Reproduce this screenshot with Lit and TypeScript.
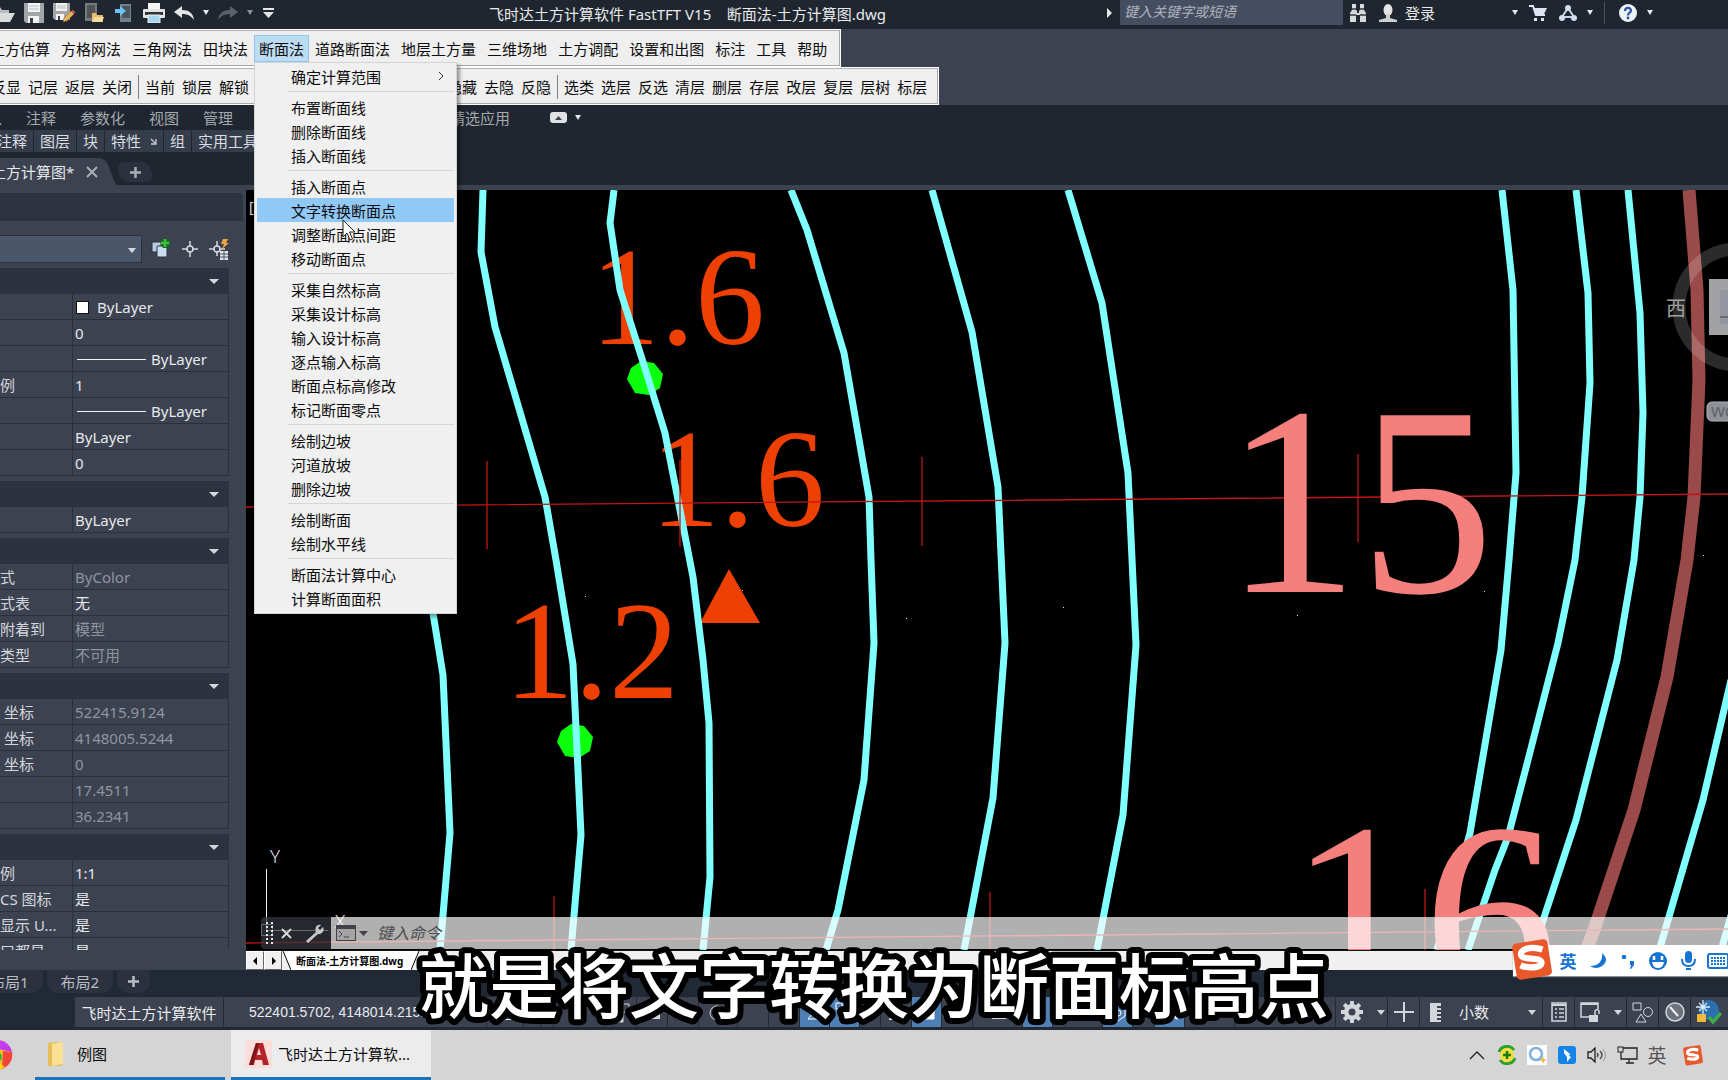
import { LitElement, html, svg, css, nothing } from "lit";
import { customElement } from "lit/decorators.js";
import { classMap } from "lit/directives/class-map.js";
import { styleMap } from "lit/directives/style-map.js";

const base = css`
  * { box-sizing: border-box; }
  button, input, select { font: inherit; color: inherit; background: none; border: 0; padding: 0; margin: 0; border-radius: 0; outline: 0; }
  button { cursor: default; white-space: nowrap; }
  svg { display: block; flex: none; }
`;

const icon = (w: number, h: number, body: unknown) =>
  html`<svg width=${w} height=${h} viewBox="0 0 ${w} ${h}" aria-hidden="true">${body}</svg>`;

const caret = (color = "#e6e8ec", w = 8) =>
  html`<svg width=${w} height="5" viewBox="0 0 8 5" preserveAspectRatio="none" aria-hidden="true"><path d="M0 0h8L4 5z" fill=${color} /></svg>`;

/* ---------- quick access icons ---------- */
const openIcon = icon(22, 20, svg`<path d="M0 4h7l2 3h7v3H6l-3 8H0z" fill="#b9bcc0"/><path d="M6 10h16l-5 9H1z" fill="#d9dadc"/>`);
const saveIcon = icon(20, 20, svg`<path d="M0 0h20v20H2l-2-2z" fill="#a3a6a9"/><rect x="4" width="12" height="9" fill="#f2f2f2"/><path d="M5 3h10M5 6h10" stroke="#b9bbbd"/><rect x="4" y="13" width="11" height="7" fill="#f4f4f4"/><rect x="6" y="15" width="3" height="5" fill="#3b4148"/>`);
const saveAsIcon = icon(22, 20, svg`<path d="M0 0h17v17H2l-2-2z" fill="#a3a6a9"/><rect x="3" width="11" height="8" fill="#f2f2f2"/><path d="M4 3h9M4 5h9" stroke="#b9bbbd"/><rect x="3" y="11" width="8" height="6" fill="#f4f4f4"/><rect x="5" y="13" width="2" height="4" fill="#3b4148"/><path d="M18 8l3 3-7 7-4 1 1-4z" fill="#e8b25a" stroke="#7a5a2a" stroke-width=".6"/><path d="M18 8l3 3 1-2-2-2z" fill="#d35b50"/>`);
const phoneFolderIcon = icon(20, 20, svg`<path d="M1 0h12v18H1z" fill="#77797c"/><path d="M3 2h8v13H3z" fill="#515457"/><path d="M8 10h4l1 2h6v7H8z" fill="#e5b96b"/><path d="M10 14h10l-2 5H8z" fill="#f7dc9c"/>`);
const phoneArrowIcon = icon(18, 20, svg`<path d="M5 1h11v18H5z" fill="#74808a"/><path d="M7 3h8v12H7z" fill="#4a545e"/><path d="M0 6h5V3l6 5-6 5v-3H0z" fill="#6cc5f5"/>`);
const printIcon = icon(22, 20, svg`<rect x="5" width="12" height="6" fill="#f4f4f4"/><rect y="6" width="22" height="9" rx="1" fill="#e4e4e4"/><rect x="2" y="9" width="18" height="3" fill="#2e3338"/><rect x="5" y="12" width="12" height="8" fill="#a8d5f0" stroke="#eee"/>`);
const undoIcon = icon(20, 14, svg`<path d="M0 6l8-6v4c7 0 11 3 12 10-3-4-6-6-12-6v4z" fill="#e4e5e7"/>`);
const redoIcon = icon(20, 14, svg`<path d="M20 6l-8-6v4C5 4 1 7 0 14c3-4 6-6 12-6v4z" fill="#5c6168"/>`);
const customizeIcon = icon(11, 10, svg`<path d="M0 1h11" stroke="#e4e5e7" stroke-width="2"/><path d="M0 4h11L5.500 10z" fill="#e4e5e7"/>`);

const binocularIcon = icon(18, 18, svg`<path d="M3 0h4v6l1 1v2h2V7l1-1V0h4v6l2 3v9h-6v-7H7v7H1V9l2-3z" fill="#d8d9db"/><path d="M1 11h6M11 11h6M3 5h4M11 5h4" stroke="#30363f" stroke-width="1.500"/>`);
const personIcon = icon(18, 18, svg`<ellipse cx="9" cy="6" rx="4.500" ry="6" fill="#e4e4e4"/><path d="M7 10h4v4l7 2v2H0v-2l7-2z" fill="#cfcfd0"/>`);
const cartIcon = icon(18, 16, svg`<path d="M0 1h4l3 9h9" fill="none" stroke="#dfe4f2" stroke-width="2"/><path d="M4 3h14l-3 6H6z" fill="#dfe4f2"/><rect x="5" y="13" width="3" height="3" fill="#dfe4f2"/><rect x="12" y="13" width="3" height="3" fill="#dfe4f2"/>`);
const autodeskIcon = icon(18, 16, svg`<path d="M9 3L3 12h12z" fill="none" stroke="#c8d2ec" stroke-width="2"/><circle cx="9" cy="3" r="3" fill="#d5dcf0"/><circle cx="3" cy="13" r="3" fill="#d5dcf0"/><circle cx="15" cy="13" r="3" fill="#d5dcf0"/>`);
const helpIcon = icon(18, 18, svg`<circle cx="9" cy="9" r="9" fill="#eef1f6"/><path d="M6 7c0-4 6-4 6-.500 0 2.500-3 2-3 5" fill="none" stroke="#2d53a5" stroke-width="2.200"/><circle cx="9" cy="14" r="1.400" fill="#2d53a5"/>`);

@customElement("title-bar")
export class TitleBar extends LitElement {
  static styles = [base, css`
    :host { display: grid; grid-template-columns: 489px 1fr 624px; height: 29px; background: #1f2630; color: #e9eaec; font-size: 15px; overflow: hidden; }
    .quick { display: flex; margin-left: -11px; height: 25px; }
    .cell { display: flex; align-items: center; justify-content: center; width: 30px; height: 25px; flex: none; }
    .w14 { width: 14px; }
    .w16 { width: 16px; }
    .w22 { width: 22px; }
    .title { line-height: 29px; white-space: pre; }
    .right { display: flex; height: 25px; }
    .search { width: 223px; height: 25px; background: #454d60; padding: 0 4px 2px; font-size: 14px; font-style: italic; }
    .search::placeholder { color: #aeb3bd; opacity: 1; }
    .login { width: 104px; padding-left: 2px; text-align: left; }
    .sep { width: 1px; margin: 2px 8px 0 7px; height: 22px; background: #4b525d; }
  `];
  render() {
    const tools: [string, unknown, string][] = [
      ["打开", openIcon, ""], ["保存", saveIcon, ""], ["另存为", saveAsIcon, ""], ["从 Web 打开", phoneFolderIcon, ""],
      ["保存到移动设备", phoneArrowIcon, ""], ["打印", printIcon, ""], ["放弃", undoIcon, ""], ["放弃列表", caret("#e6e8ec", 6), "w14"],
      ["重做", redoIcon, ""], ["重做列表", caret("#8b9098", 6), "w14"], ["自定义", customizeIcon, "w22"],
    ];
    return html`
      <div class="quick">${tools.map(([name, i, c]) => html`<button class="cell ${c}" aria-label=${name}>${i}</button>`)}</div>
      <div class="title">飞时达土方计算软件 FastTFT V15    断面法-土方计算图.dwg</div>
      <div class="right">
        <button class="cell w16" aria-label="展开">${icon(16, 12, svg`<path d="M3 1l5 5-5 5z" fill="#e6e8ec"/>`)}</button>
        <input class="search" aria-label="搜索" placeholder="键入关键字或短语" />
        <button class="cell" aria-label="查找">${binocularIcon}</button>
        <span class="cell">${personIcon}</span>
        <button class="login">登录</button>
        <button class="cell w16" aria-label="账户">${caret("#e6e8ec", 6)}</button>
        <button class="cell" aria-label="商店">${cartIcon}</button>
        <button class="cell" aria-label="应用">${autodeskIcon}</button>
        <button class="cell w14" aria-label="应用列表">${caret("#e6e8ec", 6)}</button>
        <span class="sep"></span>
        <button class="cell" aria-label="帮助">${helpIcon}</button>
        <button class="cell w14" aria-label="帮助列表">${caret("#e6e8ec", 6)}</button>
      </div>`;
  }
}

/* ---------- plug-in menu bars ---------- */
const MENUS = ["土方估算", "方格网法", "三角网法", "田块法", "断面法", "道路断面法", "地层土方量", "三维场地", "土方调配", "设置和出图", "标注", "工具", "帮助"];
const LAYERS_LEFT = [["反显", "记层", "返层", "关闭"], ["当前", "锁层", "解锁"]];
const LAYERS_RIGHT = [["隐藏", "去隐", "反隐"], ["选类", "选层", "反选", "清层", "删层", "存层", "改层", "复层", "层树", "标层"]];
const MENU_GROUPS = [
  ["确定计算范围"],
  ["布置断面线", "删除断面线", "插入断面线"],
  ["插入断面点", "文字转换断面点", "调整断面点间距", "移动断面点"],
  ["采集自然标高", "采集设计标高", "输入设计标高", "逐点输入标高", "断面点标高修改", "标记断面零点"],
  ["绘制边坡", "河道放坡", "删除边坡"],
  ["绘制断面", "绘制水平线"],
  ["断面法计算中心", "计算断面面积"],
];

@customElement("tool-rows")
export class ToolRows extends LitElement {
  static styles = [base, css`
    :host { display: flex; flex-direction: column; align-items: flex-start; background: #3c4250; color: #0c0c0c; font-size: 15px; height: 76px; }
    .bar { display: flex; align-items: center; height: 38px; background: #efefef; border: 1px solid #fff; border-left: 0; box-shadow: inset -1px -1px #a8a8a8, inset 0 1px #b4b4b4; }
    .menus { gap: 1px; padding-right: 8px; }
    .menus button { height: 27px; padding: 0 5px; }
    .menus button:first-child { margin-left: -15px; }
    .menus .open { background: #bcdcf4; box-shadow: inset 0 0 0 1px #92c6ee; }
    .layers { padding: 2px 11px 0 0; }
    .set { display: flex; gap: 7px; }
    .set + .set { margin-left: 6px; padding-left: 6px; border-left: 1px solid #7c7c7c; }
    .near { display: flex; margin-left: -9px; width: 456px; line-height: 24px; }
    .far { display: flex; line-height: 24px; }
  `];
  render() {
    const sets = (groups: string[][]) => groups.map(g => html`<div class="set">${g.map(t => html`<button>${t}</button>`)}</div>`);
    return html`
      <nav class="bar menus">${MENUS.map(m => html`<button class=${classMap({ open: m === "断面法" })}>${m}</button>`)}</nav>
      <div class="bar layers"><div class="near">${sets(LAYERS_LEFT)}</div><div class="far">${sets(LAYERS_RIGHT)}</div></div>`;
  }
}

@customElement("drop-menu")
export class DropMenu extends LitElement {
  static styles = [base, css`
    :host { display: block; width: 203px; background: #f0f0f0; border: 1px solid #d4d4d4; padding: 1px 2px 3px; font-size: 15px; color: #0c0c0c; box-shadow: 3px 3px 3px rgba(0, 0, 0, .35); }
    button { display: flex; align-items: center; justify-content: space-between; width: 100%; height: 24px; padding: 0 10px 0 34px; }
    .hot { background: #90c8f6; }
    .group + .group { padding-top: 7px; background: linear-gradient(#d5d5d5, #d5d5d5) 31px 3px / 100% 1px no-repeat; }
    .cursor { position: absolute; left: 87px; top: 156px; }
  `];
  render() {
    return html`
      ${MENU_GROUPS.map(g => html`<div class="group" role="group">${g.map(t => html`
        <button role="menuitem" class=${classMap({ hot: t === "文字转换断面点" })}>${t}${t === "确定计算范围" ? icon(6, 10, svg`<path d="M1 1l4 4-4 4" fill="none" stroke="#333"/>`) : nothing}</button>`)}</div>`)}
      <div class="cursor">${icon(14, 22, svg`<path d="M1 1v17l4-4 3 7 2.500-1-3-7H13z" fill="#fff" stroke="#222"/>`)}</div>`;
  }
}

/* ---------- ribbon and file tabs ---------- */
@customElement("ribbon-strip")
export class RibbonStrip extends LitElement {
  static styles = [base, css`
    :host { display: block; height: 85px; background: #1f2630; font-size: 15px; overflow: hidden; border-bottom: 5px solid #3c4250; }
    .tabs { display: flex; align-items: center; gap: 24px; height: 25px; margin-left: -28px; color: #a4a8af; }
    .featured { margin-left: 193px; }
    .toggle { display: flex; align-items: center; gap: 8px; margin-left: 16px; }
    .panels { display: flex; height: 22px; gap: 1px; color: #d9dce1; }
    .panels button { background: #363d4a; padding: 0 6px; display: flex; align-items: center; gap: 9px; line-height: 20px; }
    .panels button:first-child { margin-left: -9px; }
    .files { display: flex; height: 33px; padding-top: 6px; color: #e4e6ea; }
    .file { display: flex; align-items: center; gap: 12px; height: 27px; width: 118px; background: #3c4250; clip-path: path("M0 0H98Q106 0 109 9L113 20Q115 27 118 27H0z"); }
    .file span { margin-left: -9px; }
    .add { width: 34px; height: 20px; margin-top: 4px; background: #2b323d; border-radius: 6px 12px 6px 12px; display: flex; align-items: center; justify-content: center; }
  `];
  render() {
    return html`
      <nav class="tabs">
        <button>插入</button><button>注释</button><button>参数化</button><button>视图</button><button>管理</button>
        <button class="featured">精选应用</button>
        <button class="toggle" aria-label="最小化功能区">${icon(17, 11, svg`<rect width="17" height="11" rx="3" fill="#dfe1e4"/><path d="M5 8l3.500-4L12 8z" fill="#3b424e"/>`)}${caret("#e6e8ec", 6)}</button>
      </nav>
      <div class="panels">
        <button>注释</button><button>图层</button><button>块</button>
        <button>特性${icon(7, 7, svg`<path d="M1 1l4 4M6 1v5H1" fill="none" stroke="#c9ccd2" stroke-width="1.300"/>`)}</button>
        <button>组</button><button>实用工具</button>
      </div>
      <div class="files">
        <div class="file"><span>土方计算图*</span><button aria-label="关闭文件">${icon(12, 12, svg`<path d="M1 1l10 10M11 1L1 11" stroke="#a9adb4" stroke-width="2"/>`)}</button></div>
        <button class="add" aria-label="新图形">${icon(11, 11, svg`<path d="M5.500 0v11M0 5.500h11" stroke="#a9adb4" stroke-width="2.500"/>`)}</button>
      </div>`;
  }
}

/* ---------- property palette ---------- */
type Prop = { label?: string; value: string; dim?: boolean; mark?: "swatch" | "line" };
const SECTIONS: { name: string; rows: Prop[] }[] = [
  { name: "常规", rows: [
    { value: "ByLayer", mark: "swatch" }, { value: "0" }, { value: "ByLayer", mark: "line" }, { label: "例", value: "1" },
    { value: "ByLayer", mark: "line" }, { value: "ByLayer" }, { value: "0" }] },
  { name: "三维效果", rows: [{ value: "ByLayer" }] },
  { name: "打印样式", rows: [
    { label: "式", value: "ByColor", dim: true }, { label: "式表", value: "无" }, { label: "附着到", value: "模型", dim: true }, { label: "类型", value: "不可用", dim: true }] },
  { name: "视图", rows: [
    { label: " 坐标", value: "522415.9124", dim: true }, { label: " 坐标", value: "4148005.5244", dim: true }, { label: " 坐标", value: "0", dim: true },
    { value: "17.4511", dim: true }, { value: "36.2341", dim: true }] },
  { name: "其他", rows: [
    { label: "例", value: "1:1" }, { label: "CS 图标", value: "是" }, { label: "显示 U...", value: "是" }, { label: "口都显", value: "是" }] },
];

@customElement("property-palette")
export class PropertyPalette extends LitElement {
  static styles = [base, css`
    :host { display: flex; flex-direction: column; background: #3c4250; color: #e6e8ec; font-size: 15px; min-height: 0; padding: 3px 3px 20px 0; }
    .caption { height: 28px; background: #2e3340; flex: none; border-radius: 0 4px 0 0; }
    .pick { display: flex; align-items: center; height: 28px; margin: 14px 0 5px; flex: none; }
    .combo { position: relative; width: 142px; height: 28px; background: #4a566a; border: 1px solid #2c3441; border-left: 0; }
    .combo select { width: 100%; height: 100%; appearance: none; }
    .combo svg { position: absolute; right: 5px; top: 12px; pointer-events: none; }
    .tools { display: flex; gap: 11px; margin-left: 9px; }
    .list { flex: 1; min-height: 0; overflow: hidden; margin-right: 14px; }
    .head { display: flex; justify-content: flex-end; align-items: center; width: 100%; height: 26px; padding-right: 10px; background: #2c323e; }
    table { width: 100%; border-collapse: separate; border-spacing: 0; table-layout: fixed; margin-bottom: 5px; }
    tr { height: 26px; }
    th, td { padding: 0; height: 26px; line-height: 24px; border-bottom: 1px solid #2a303c; text-align: left; font-weight: 400; white-space: pre; overflow: hidden; }
    th { width: 73px; border-right: 1px solid #2a303c; color: #d3d6db; }
    td { padding-left: 2px; border-right: 1px solid #2a303c; }
    .dim { color: #8f95a0; }
    .swatch { display: inline-block; width: 13px; height: 13px; margin: 0 8px 0 1px; vertical-align: -1px; background: #fff; border: 1px solid #111; }
    .line { display: inline-block; width: 69px; height: 1px; margin: 0 5px 0 2px; vertical-align: 5px; background: #f2f3f5; }
  `];
  render() {
    return html`
      <div class="caption"></div>
      <div class="pick">
        <div class="combo"><select aria-label="对象类型"><option></option></select>${caret("#d4d8de")}</div>
        <div class="tools">
          <button aria-label="切换 PICKADD">${icon(20, 22, svg`<rect x="1" y="4" width="9" height="10" rx="1" fill="#b8cde4" stroke="#27303c"/><rect x="6" y="8" width="10" height="11" rx="1" fill="#c9dcf0" stroke="#27303c"/><path d="M14 1v9M10 5h9" stroke="#12701a" stroke-width="5"/><path d="M14 1v8M10 5h8" stroke="#35c435" stroke-width="2.500"/>`)}</button>
          <button aria-label="选择对象">${icon(16, 22, svg`<path d="M8 3v6M8 13v6M0 11h6M10 11h6" stroke="#d5d8dd" stroke-width="1.500"/><circle cx="8" cy="11" r="3" fill="none" stroke="#d5d8dd" stroke-width="1.500"/>`)}</button>
          <button aria-label="快速选择">${icon(20, 22, svg`<path d="M8 3v6M8 13v5M0 11h6M10 11h6" stroke="#d5d8dd" stroke-width="1.500"/><circle cx="8" cy="11" r="3" fill="none" stroke="#d5d8dd" stroke-width="1.500"/><path d="M14 1h5l-2 4h3l-7 6 2-5h-3z" fill="#f0a742"/><path d="M11 13h8v9h-8z" fill="#e4e6ea"/><path d="M11 16h8M11 19h8M15 13v9" stroke="#4b5260"/>`)}</button>
        </div>
      </div>
      <div class="list">
        ${SECTIONS.map(s => html`
          <button class="head" aria-label=${s.name}>${caret("#d4d8de", 10)}</button>
          <table><tbody>${s.rows.map(r => html`<tr><th scope="row">${r.label ?? ""}</th><td class=${classMap({ dim: !!r.dim })}>${r.mark ? html`<i class=${r.mark}></i>` : nothing}${r.value}</td></tr>`)}</tbody></table>`)}
      </div>`;
  }
}

/* ---------- model space ---------- */
const CONTOURS = [
  "427,575 433,613 443,675 450,833 440,950",
  "483,190 481,252 495,327 545,497 556,560 573,664 581,835 571,950",
  "614,190 610,223 620,290 644,365 665,433 693,577 703,660 709,723 710,877 703,950",
  "791,190 807,230 844,353 869,497 871,560 874,643 864,780 838,910 826,950",
  "932,190 972,332 998,487 1005,643 993,798 964,950",
  "1068,190 1102,303 1128,473 1136,645 1123,815 1097,950",
  "1502,190 1513,290 1516,473 1509,560 1501,650 1470,833 1457,880 1437,950",
  "1576,190 1588,293 1590,383 1582,497 1575,560 1558,643 1528,760 1508,837 1495,870 1468,950",
  "1628,190 1640,313 1643,413 1640,497 1634,560 1617,660 1576,820 1533,951",
  "1731,680 1703,800 1659,951",
  "1734,905 1721,951",
];
const TICKS = [[487, 461, 549], [680, 460, 547], [922, 457, 546], [1358, 454, 542], [554, 896, 951], [990, 892, 951], [1425, 889, 951]];
const SPECKS = [[585, 596], [742, 590], [906, 618], [1063, 607], [1297, 615], [1484, 591], [1703, 555]];
const octagon = (x: number, y: number) => {
  const pts = [[-18, 1], [-14, -10], [-4, -17], [9, -15], [18, -4], [15, 10], [4, 17], [-10, 15]];
  return svg`<polygon points=${pts.map(([a, b]) => `${x + a},${y + b}`).join(" ")} fill="#0cff0c"/>`;
};

@customElement("model-space")
export class ModelSpace extends LitElement {
  static styles = [base, css`
    :host { display: flex; flex-direction: column; min-width: 0; min-height: 0; }
    .canvas { position: relative; flex: 1; min-height: 0; background: #000; overflow: hidden; }
    .canvas > svg { width: 100%; height: 100%; position: absolute; }
    .elev { font: 140px "Liberation Serif", serif; fill: #ee4003; }
    .big { font: 270px "Liberation Serif", serif; fill: #f57f7d; }
    .axis { font: 300 19px "Open Sans", "Noto Sans", sans-serif; fill: #fff; }
    .view { font: 14px "Noto Sans", sans-serif; fill: #ddd; }
    .compass { font: 20px "Noto Sans CJK SC", sans-serif; fill: #a0a0a0; }
    .wcs { font: 15px "Noto Sans", sans-serif; fill: #5b5e66; }
    .command { position: absolute; left: 15px; right: 0; bottom: 1px; height: 32px; display: flex; }
    .grip { display: flex; align-items: center; gap: 7px; width: 70px; padding-left: 5px; background: rgba(52, 56, 64, .72); border-radius: 4px 0 0 4px; }
    .grip button + button { margin-left: 6px; }
    .entry { display: flex; flex: 1; align-items: center; padding-left: 5px; background: rgba(255, 255, 255, .69); }
    .entry button { display: flex; align-items: center; gap: 3px; }
    .entry input { flex: 1; margin-left: 9px; font-size: 16px; font-style: italic; color: #333; }
    .entry input::placeholder { color: #4f4f4f; opacity: 1; }
    .strip { display: flex; height: 20px; background: #f0f0f0; border-top: 1px solid #111; flex: none; }
    .strip .arrow { width: 18px; display: flex; align-items: center; justify-content: center; border: 1px solid #888; border-color: #fff #666 #666 #fff; }
    .tab { padding: 0 8px 0 5px; font-size: 10px; font-weight: 700; color: #000; background: #fff; }
  `];
  render() {
    return html`
      <div class="canvas">
        <svg aria-label="模型空间">
          <g transform="translate(-246 -190)">
            <text class="elev" x="590" y="344">1.6</text>
            <text class="elev" x="650" y="526">1.6</text>
            <text class="elev" x="504" y="698">1.2</text>
            <polygon points="729,569 760,623 700,623" fill="#ee4003"/>
            ${octagon(645, 378)}${octagon(575, 741)}
            <polyline points="1689,190 1697,290 1699,380 1694,497 1687,560 1667,677 1634,810 1595,927 1586,951" fill="none" stroke="#994a49" stroke-width="13"/>
            <g fill="none" stroke="#80ffff" stroke-width="7">${CONTOURS.map(p => svg`<polyline points=${p}/>`)}</g>
            <g stroke="#c01616" stroke-width="1.300">
              <path d="M246 507L1728 494M246 943L1728 929"/>
              ${TICKS.map(([x, a, b]) => svg`<path d=${`M${x} ${a}V${b}`}/>`)}
            </g>
            <text class="big" x="1224" y="592">15</text>
            <text class="big" x="1288" y="1008">16</text>
            ${SPECKS.map(([x, y]) => svg`<rect x=${x} y=${y} width="1" height="1" fill="#ddd"/>`)}
            <text class="view" x="249" y="212">[</text>
            <text class="axis" x="270" y="863">Y</text>
            <text class="axis" x="335" y="928">X</text>
            <path d="M266.500 869v61.500h62M261.500 924.500h11v11h-11z" fill="none" stroke="#ececec"/>
            <circle cx="1737" cy="307" r="58" fill="none" stroke="#fff" stroke-opacity=".17" stroke-width="13"/>
            <rect x="1709" y="279" width="56" height="56" fill="#a2a2a5"/><rect x="1720" y="290" width="40" height="34" fill="#9496a0"/><path d="M1720 317h10" stroke="#444"/>
            <text class="compass" x="1666" y="316">西</text>
            <rect x="1707" y="402" width="48" height="19" rx="5" fill="#8f9199" stroke="#b3b5bb"/>
            <text class="wcs" x="1711" y="417">WCS</text>
          </g>
        </svg>
        <div class="command">
          <div class="grip">
            ${icon(8, 22, svg`<path d="M1 0v22M6 0v22" stroke="#e2e3e5" stroke-width="2" stroke-dasharray="2 2"/>`)}
            <button aria-label="关闭命令行">${icon(11, 11, svg`<path d="M1 1l9 9M10 1l-9 9" stroke="#d4d5d7" stroke-width="2"/>`)}</button>
            <button aria-label="命令行设置">${icon(19, 19, svg`<path d="M1 17L11 8C9 4 12 0 16 1l-3 3 2 2 3-3c2 4-2 8-5 7L3 19z" fill="#c4c6c9"/>`)}</button>
          </div>
          <label class="entry">
            <button aria-label="近期命令">${icon(20, 16, svg`<rect x=".500" y=".500" width="19" height="15" fill="#a3a3a3" stroke="#3e4247"/><rect width="20" height="4" fill="#3e4247"/><path d="M3 6l3 3-3 3M8 12h5" fill="none" stroke="#3e4247"/>`)}${caret("#3e4247", 9)}</button>
            <input aria-label="命令" placeholder="键入命令" />
          </label>
        </div>
      </div>
      <div class="strip">
        <button class="arrow" aria-label="上一个">${icon(5, 8, svg`<path d="M4 0v8L0 4z" fill="#000"/>`)}</button>
        <button class="arrow" aria-label="下一个">${icon(5, 8, svg`<path d="M1 0v8l4-4z" fill="#000"/>`)}</button>
        ${icon(9, 19, svg`<path d="M0 0h9v19z" fill="#fff"/><path d="M1 0l8 19" stroke="#000"/>`)}
        <button class="tab">断面法-土方计算图.dwg</button>
        ${icon(9, 19, svg`<path d="M0 0h9L0 19z" fill="#fff"/><path d="M8 0L0 19" stroke="#000"/>`)}
      </div>`;
  }
}

/* ---------- layout tabs and status bar ---------- */
const G = "#d3d6db";
const glyphs: Record<string, unknown> = {
  none: nothing,
  dots: svg`<path d="M4 3v3M4 9v3M4 15v3M12 3v3M12 9v3M12 15v3" stroke=${G} stroke-width="3"/>`,
  snap: svg`<path d="M4 8h8v12H4zM12 2h6v8h-6z" fill="none" stroke=${G}/><path d="M4 12h8v8H4z" fill=${G}/>`,
  rect: svg`<path d="M4 12h14v5H4z" fill=${G}/>`,
  polar: svg`<circle cx="9" cy="11" r="7" fill="none" stroke=${G}/><path d="M9 11l9-8" stroke=${G}/>`,
  iso: svg`<path d="M2 2l16 16" stroke="#b36a5c"/><path d="M11 4v14" stroke=${G}/>`,
  angle: svg`<path d="M3 17L14 4M3 17h15" stroke="#fff" fill="none"/>`,
  osnap: svg`<path d="M4 4h13v13H4z" fill="none" stroke="#fff"/><path d="M1 1h6v6H1z" fill="#4f80b5" stroke="#fff"/>`,
  bars: svg`<path d="M3 5h14M3 11h14M3 17h14" stroke=${G} stroke-width="2"/>`,
  cells: svg`<path d="M3 3h14v14H3z" fill="none" stroke="#fff"/><path d="M10 10h7v7h-7z" fill="#fff"/>`,
  tri: svg`<path d="M4 4l13 7-13 7z" fill="#fff"/>`,
  hex: svg`<path d="M10 2l7 4v8l-7 5-7-5V6z" fill="none" stroke="#fff"/><circle cx="10" cy="11" r="3" fill="none" stroke="#fff"/>`,
  star: svg`<path d="M10 2l8 16-8-4-8 4z" fill="#fff"/>`,
};
const CELLS: [number, string, boolean?][] = [
  [16, "none"], [12, "none"], [50, "dots"], [31, "snap"], [30, "rect"], [30, "none"], [38, "polar"], [30, "none"], [30, "iso"],
  [29, "angle", true], [29, "osnap", true], [20, "none"], [30, "bars"], [29, "cells", true], [30, "none"], [49, "rect"],
  [29, "tri", true], [49, "none"], [29, "hex", true], [21, "none"], [29, "star", true], [49, "star"], [100, "none"],
];

@customElement("status-bar")
export class StatusBar extends LitElement {
  static styles = [base, css`
    :host { display: block; background: #212934; color: #e9ebee; font-size: 15px; overflow: hidden; }
    .layouts { display: flex; height: 27px; color: #b9bdc4; }
    .layouts button { height: 23px; background: #2b323e; border-radius: 0 0 12px 12px; padding: 0 14px; margin-right: 4px; }
    .layouts button:first-child { margin-left: -24px; }
    .layouts .add { padding: 0 11px; }
    .status { display: flex; gap: 1px; height: 32px; padding: 0 0 2px 75px; }
    .cell { display: flex; align-items: center; justify-content: center; background: #3c4250; flex: none; }
    .app { width: 148px; }
    .coords { width: 262px; padding-left: 25px; justify-content: flex-start; font-family: "Liberation Sans", "Noto Sans CJK SC", sans-serif; font-size: 14px; white-space: nowrap; }
    .model { width: 36px; }
    .on { background: #4f80b5; }
    .gear { gap: 14px; width: 51px; padding-left: 2px; }
    .w31 { width: 31px; }
    .units { position: relative; width: 122px; padding: 0 6px 0 10px; }
    .units select { flex: 1; min-width: 0; appearance: none; padding-left: 18px; }
    .lock { width: 51px; gap: 13px; }
    .last { flex: 1; justify-content: flex-start; padding-left: 5px; }
  `];
  render() {
    const teeth = [0, 45, 90, 135].map(a => svg`<rect x="9" y="0" width="4" height="22" transform="rotate(${a} 11 11)"/>`);
    return html`
      <div class="layouts"><button>布局1</button><button>布局2</button><button class="add" aria-label="新建布局">${icon(11, 11, svg`<path d="M5.500 0v11M0 5.500h11" stroke="#b9bdc4" stroke-width="2.500"/>`)}</button></div>
      <div class="status">
        <div class="cell app">飞时达土方计算软件</div>
        <div class="cell coords">522401.5702, 4148014.2151, 0.0000</div>
        <button class="cell model">模型</button>
        ${CELLS.map(([w, g, on]) => html`<span class=${classMap({ cell: true, on: !!on })} style=${styleMap({ width: `${w}px` })}>${g === "none" ? nothing : icon(20, 21, glyphs[g])}</span>`)}
        <button class="cell gear" aria-label="切换工作空间">${icon(22, 22, svg`<g fill=${G}>${teeth}</g><circle cx="11" cy="11" r="8" fill=${G}/><circle cx="11" cy="11" r="3.500" fill="#3c4250"/>`)}${caret(G)}</button>
        <button class="cell w31" aria-label="注释监视器">${icon(20, 20, svg`<path d="M10 0v20M0 10h20" stroke=${G} stroke-width="2"/>`)}</button>
        <label class="cell units">${icon(11, 19, svg`<path d="M0 0h11v3H7v2h4v2H7v2h4v2H7v2h4v2H7v2h4v2H0z" fill=${G}/>`)}<select aria-label="单位"><option>小数</option></select>${caret(G)}</label>
        <button class="cell w31" aria-label="快捷特性">${icon(16, 20, svg`<path d="M1 1h14v18H1z" fill="none" stroke=${G} stroke-width="1.500"/><path d="M1 3h14" stroke=${G} stroke-width="2"/><path d="M4 7h2M4 11h2M4 15h2M8 7h5M8 11h5M8 15h5" stroke=${G} stroke-width="1.500"/>`)}</button>
        <button class="cell lock" aria-label="锁定用户界面">${icon(21, 21, svg`<path d="M9 15H1V1h17v6" fill="none" stroke=${G} stroke-width="1.500"/><path d="M1 2h17" stroke=${G} stroke-width="2"/><rect x="9" y="13" width="9" height="7" fill=${G}/><path d="M15 13V9q2-3 4 0v3" fill="none" stroke=${G} stroke-width="1.500"/>`)}${caret(G)}</button>
        <button class="cell w31" aria-label="隔离对象">${icon(21, 21, svg`<g fill="none" stroke=${G}><path d="M1 1h8v7H1zM9 12l5 8H4z"/><circle cx="16" cy="10" r="4.500"/></g>`)}</button>
        <button class="cell w31" aria-label="硬件加速">${icon(20, 20, svg`<circle cx="10" cy="10" r="9" fill="#6d727c" stroke=${G} stroke-width="1.500"/><path d="M5 5l8 9" stroke="#eef0f2" stroke-width="2"/>`)}</button>
        <div class="cell last">${icon(26, 26, svg`<circle cx="13" cy="11" r="10" fill="#2c6fae"/><path d="M7 1v14M0 8h14M3 4l8 8M11 4l-8 8" stroke="#d6ecfa" stroke-width="1.300"/><rect x="1" y="15" width="9" height="8" fill="#f0b93c"/><path d="M13 18l4 5 8-9" fill="none" stroke="#3fa84a" stroke-width="3.500"/>`)}</div>
      </div>`;
  }
}

/* ---------- desktop task bar ---------- */
const sogou = (s: number) => html`<svg width=${s} height=${s} viewBox="0 0 42 42" aria-hidden="true"><rect x="4" y="4" width="34" height="35" rx="4" fill="#e8582b" transform="rotate(-9 21 21)"/><path d="M31 12C20 8 8 12 11 18c2 4 18 1 19 6 1 6-13 6-20 3" fill="none" stroke="#fff" stroke-width="6"/></svg>`;

@customElement("task-bar")
export class TaskBar extends LitElement {
  static styles = [base, css`
    :host { display: flex; height: 51px; background: #d5d5d6; color: #0b0b0b; font-size: 15px; border-top: 1px solid #222a36; overflow: hidden; }
    .orb { width: 35px; display: flex; align-items: center; flex: none; }
    .orb svg { margin-left: -19px; }
    .task { display: flex; align-items: center; height: 50px; border-bottom: 3px solid #1b74b9; margin-right: 6px; text-align: left; }
    .folder { width: 190px; padding-left: 12px; gap: 13px; }
    .active { width: 200px; background: #ececec; padding-left: 14px; gap: 6px; }
    .tray { display: flex; align-items: center; margin-left: auto; padding-right: 24px; gap: 8px; height: 50px; }
    .tray > * { width: 22px; display: flex; justify-content: center; }
    .tray .ime { width: 22px; font-size: 19px; color: #555; margin-right: 6px; }
  `];
  render() {
    return html`
      <button class="orb" aria-label="浏览器">${icon(32, 32, svg`<circle cx="16" cy="16" r="15" fill="#f4c21b"/><path d="M16 1a15 15 0 0 1 15 12L16 10z" fill="#c43cf0"/><path d="M31 13a15 15 0 0 1-10 17l1-18z" fill="#f4453c"/><path d="M24 28a15 15 0 0 1-16 0l8-6z" fill="#f6d91f"/><circle cx="16" cy="18" r="5" fill="#39b54a"/>`)}</button>
      <button class="task folder">${icon(17, 26, svg`<path d="M1 2l9-1 5 2v22H1z" fill="#e8bd57"/><path d="M5 3l11-2v22L5 25z" fill="#fbe093"/>`)}例图</button>
      <button class="task active">${icon(27, 28, svg`<rect width="27" height="28" fill="#f9ded9"/><path d="M4 25L11 3h7l6 22h-6l-1-5h-7l-1 5z" fill="#b4232a"/><path d="M12 15h4l-2-7z" fill="#f9ded9"/><path d="M4 25L11 3h3L8 25z" fill="#7e151b"/>`)}飞时达土方计算软...</button>
      <div class="tray">
        <button aria-label="显示隐藏的图标">${icon(16, 10, svg`<path d="M1 9l7-7 7 7" fill="none" stroke="#222" stroke-width="1.300"/>`)}</button>
        <span>${icon(20, 20, svg`<path d="M2 7A8.500 8.500 0 0 1 17 5" fill="none" stroke="#2fa02c" stroke-width="3"/><path d="M18 13A8.500 8.500 0 0 1 3 15" fill="none" stroke="#2fa02c" stroke-width="3"/><circle cx="10" cy="10" r="7" fill="#f3df3a"/><path d="M10 6v8M6 10h8" stroke="#167a1c" stroke-width="2.500"/>`)}</span>
        <span>${icon(20, 20, svg`<rect width="20" height="20" fill="#fafcff"/><circle cx="9" cy="9" r="6" fill="none" stroke="#7fb2dd" stroke-width="2.500"/><path d="M8 15h5" stroke="#7fb2dd" stroke-width="2"/><path d="M16 11l1 3 3 1-3 1-1 3-1-3-3-1 3-1z" fill="#ecb64a"/>`)}</span>
        <span>${icon(18, 18, svg`<rect width="18" height="18" rx="3" fill="#1583e8"/><path d="M6 3l6 5-1 2 2 1-4 5V11L6 7z" fill="#fff"/>`)}</span>
        <button aria-label="音量">${icon(20, 16, svg`<path d="M1 5h3l4-4v14l-4-4H1z" fill="none" stroke="#222" stroke-width="1.300"/><path d="M10 6q2 2 0 4M13 4q4 4 0 8" fill="none" stroke="#444" stroke-width="1.300"/><path d="M16 2q5 6 0 12" fill="none" stroke="#999"/>`)}</button>
        <button aria-label="网络">${icon(21, 18, svg`<path d="M4 2h16v11H4zM9 17h8M12 13v4" fill="none" stroke="#222" stroke-width="1.300"/><rect x="1" y="1" width="5" height="5" fill="#d5d5d6" stroke="#222"/>`)}</button>
        <button class="ime">英</button>
        <span>${sogou(22)}</span>
      </div>`;
  }
}

@customElement("ime-bar")
export class ImeBar extends LitElement {
  static styles = [base, css`
    :host { display: flex; align-items: center; height: 31px; background: #fff; color: #1774d1; padding-left: 44px; box-shadow: 0 1px 1px #8a8d92; }
    .logo { position: absolute; left: -3px; top: -8px; }
    .items { display: flex; align-items: center; gap: 8px; }
    .items > * { width: 22px; display: flex; justify-content: center; }
    .lang { font-size: 17px; font-weight: 700; }
  `];
  render() {
    const c = "#1774d1";
    return html`
      <div class="logo">${sogou(44)}</div>
      <div class="items">
        <button class="lang">英</button>
        <button aria-label="全半角">${icon(17, 18, svg`<path d="M12 1q8 7 0 13-6 4-12 0 7 0 10-4t2-9z" fill=${c}/>`)}</button>
        <button aria-label="标点">${icon(15, 16, svg`<circle cx="3" cy="4" r="2.300" fill=${c}/><path d="M9 8h4v4l-3 4H9l1-4H9z" fill=${c}/>`)}</button>
        <button aria-label="表情">${icon(18, 18, svg`<circle cx="9" cy="9" r="9" fill=${c}/><path d="M5 4v4M13 4v4" stroke="#fff" stroke-width="2.500"/><path d="M3 10h12q-1 6-6 6t-6-6z" fill="#fff"/>`)}</button>
        <button aria-label="语音">${icon(15, 20, svg`<rect x="4" width="7" height="12" rx="3.500" fill=${c}/><path d="M1 8q0 7 6.500 7T14 8" fill="none" stroke=${c} stroke-width="2"/><path d="M5 18h5" stroke=${c} stroke-width="2"/>`)}</button>
        <button aria-label="软键盘">${icon(22, 16, svg`<rect x="1" y="1" width="20" height="14" rx="2" fill="none" stroke=${c} stroke-width="2"/><path d="M4 5h14M4 8h14M4 11h14" stroke=${c} stroke-width="2" stroke-dasharray="2 1"/>`)}</button>
      </div>`;
  }
}

@customElement("app-root")
export class AppRoot extends LitElement {
  static styles = [base, css`
    :host { position: relative; display: flex; flex-direction: column; height: 100vh; overflow: hidden; background: #1f2630; font-family: "Noto Sans", "Noto Sans CJK SC", sans-serif; }
    .work { flex: 1; min-height: 0; display: grid; grid-template-columns: 246px 1fr; grid-template-rows: minmax(0, 1fr); }
    .menu { position: absolute; left: 254px; top: 62px; }
    .ime { position: absolute; right: 0; bottom: 104px; width: 215px; }
    .subtitle { position: absolute; left: 0; bottom: 40px; width: 100%; height: 100px; pointer-events: none; }
    .subtitle text { font: 500 70px "Noto Sans CJK SC", sans-serif; fill: #fff; stroke: #000; stroke-width: 12px; stroke-linejoin: round; paint-order: stroke; }
  `];
  render() {
    return html`
      <title-bar></title-bar>
      <tool-rows></tool-rows>
      <ribbon-strip></ribbon-strip>
      <main class="work"><property-palette></property-palette><model-space></model-space></main>
      <status-bar></status-bar>
      <task-bar></task-bar>
      <drop-menu class="menu" role="menu"></drop-menu>
      <svg class="subtitle"><text x="419" y="73">就是将文字转换为断面标高点</text></svg>
      <ime-bar class="ime"></ime-bar>`;
  }
}
